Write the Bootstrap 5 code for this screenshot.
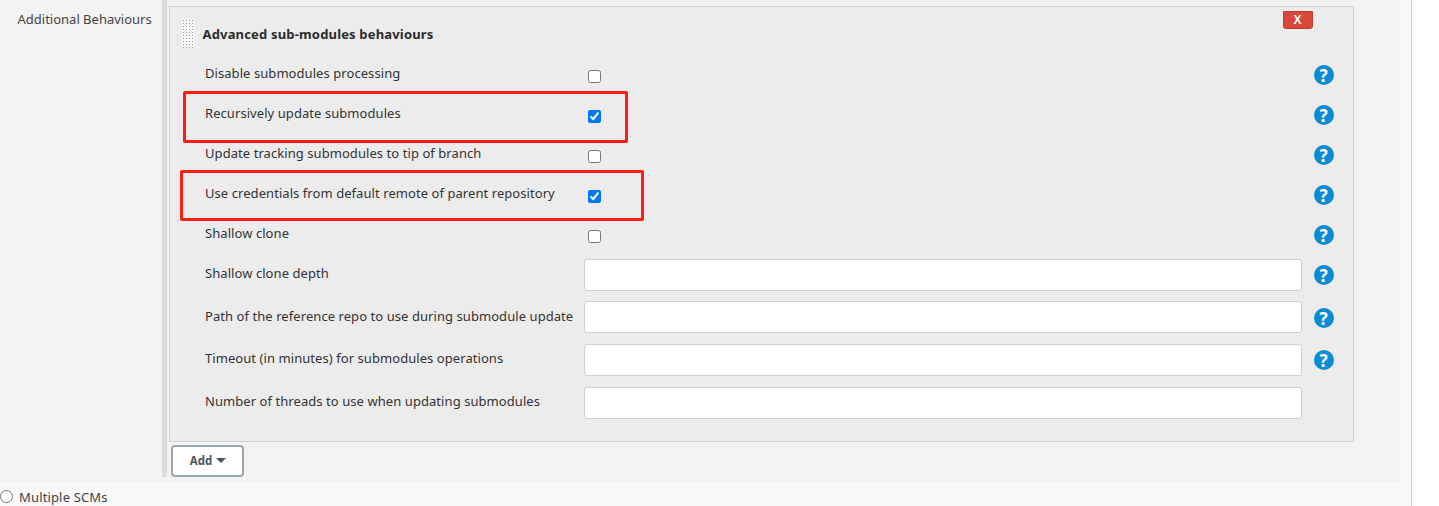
<!DOCTYPE html>
<html lang="en">
<head>
<meta charset="utf-8">
<title>Advanced sub-modules behaviours</title>
<link href="https://cdn.jsdelivr.net/npm/bootstrap@5.3.0/dist/css/bootstrap.min.css" rel="stylesheet">
<style>
html,body{height:506px;overflow:hidden}
body{background:#fff;font-family:"Noto Sans","Open Sans",sans-serif;font-size:13px;color:#333;line-height:18px}
.jk-page{width:1412px;height:506px;background:#f9f9f9;border-right:1px solid #c8c8c8}
.jk-sect{width:1400px;height:482px;background:#f3f3f3}
.jk-side{width:162px;padding:10px 0 0 18px;color:#444;flex:none;margin-left:-.5px}
.jk-main{width:1238px;height:477px;border-left:5px solid #dcdcdc;padding:6px 0 0 2px;flex:none}
.jk-panel{position:relative;width:1185px;height:436px;background:#ececec;border:1px solid #d2d2d2}
.jk-head{height:49px;padding-left:12px}
.jk-grip{width:13px;height:29px;margin-top:12px;flex:none;background-color:#f7f7f7;background-image:radial-gradient(#9c9c9c .8px,transparent .9px);background-size:3px 3px}
.jk-title{margin:18px 0 0 8px;font-weight:700;color:#2b2b2b;letter-spacing:.17px}
.jk-close{width:30px;height:18px;margin:4px 40px 0 0;background:#d9483b;color:#fff;border:1px solid #c43c30;border-radius:0 0 3px 3px;font-family:"Liberation Sans",sans-serif;font-size:12px;font-weight:700;line-height:15px;padding:0}
.jk-row{padding-left:35px}
.jk-chk{height:40px}
.jk-lab{width:414px;padding-left:35.5px;flex:none;margin-left:-35px;letter-spacing:.065px}
.jk-chk .jk-lab{margin-top:-7px}
.jk-inp .jk-lab{margin-top:-4px}
.jk-inp .jk-lab.jk-lift{margin-top:-2px}
.jk-field{width:718px;flex:none}
.jk-inp{height:32px;margin-bottom:10px}
.jk-inp.jk-first{margin-top:3px}
.jk-inp.jk-wide{margin-bottom:11px}
.jk-text{width:718px;height:32px;background:#fff;border:1px solid #cfcfcf;border-radius:3px;padding:0 8px;display:block}
.jk-box{width:13px;height:13px;margin:0 0 0 4px;display:block}
.jk-help{width:20px;height:20px;margin-left:12px;background:#0b8ad6;color:#fff;font-weight:700;font-size:17px;line-height:1;flex:none}
.jk-chk .jk-help{margin-top:-2px}
.jk-inp .jk-help.jk-low{margin-top:2px}
.jk-mark{position:absolute;border:3px solid #fb1c12;border-radius:2px;pointer-events:none}
.jk-mark-a{left:13px;top:84px;width:445px;height:52px}
.jk-mark-b{left:10px;top:163px;width:464px;height:51px}
.jk-add{width:73px;height:32px;margin:3px 0 0 2px;padding:0 0 0 2px;background:#fff;border:2px solid #9aa6b2;border-radius:4px;color:#4d545d;font-size:11.5px;font-weight:700;line-height:1}
.jk-add.dropdown-toggle::after{border-top-width:5px;border-left-width:5px;border-right-width:5px;margin-left:4px;vertical-align:2px}
.jk-radio{height:24px;padding-top:5px;color:#444;letter-spacing:.15px}
.jk-radio input{margin:0 6px 0 0;width:13px;height:13px;flex:none}
</style>
</head>
<body>
<div class="jk-page">
  <div class="jk-sect d-flex">
    <div class="jk-side">Additional Behaviours</div>
    <div class="jk-main">
      <div class="jk-panel">
        <div class="jk-head d-flex align-items-start">
          <div class="jk-grip"></div>
          <div class="jk-title flex-grow-1">Advanced sub-modules behaviours</div>
          <button type="button" class="jk-close">X</button>
        </div>
        <div class="jk-row jk-chk d-flex align-items-center">
          <div class="jk-lab">Disable submodules processing</div>
          <div class="jk-field"><input class="jk-box" type="checkbox"></div>
          <div class="jk-help rounded-circle d-flex align-items-center justify-content-center">?</div>
        </div>
        <div class="jk-row jk-chk d-flex align-items-center">
          <div class="jk-lab">Recursively update submodules</div>
          <div class="jk-field"><input class="jk-box" type="checkbox" checked></div>
          <div class="jk-help rounded-circle d-flex align-items-center justify-content-center">?</div>
        </div>
        <div class="jk-row jk-chk d-flex align-items-center">
          <div class="jk-lab">Update tracking submodules to tip of branch</div>
          <div class="jk-field"><input class="jk-box" type="checkbox"></div>
          <div class="jk-help rounded-circle d-flex align-items-center justify-content-center">?</div>
        </div>
        <div class="jk-row jk-chk d-flex align-items-center">
          <div class="jk-lab">Use credentials from default remote of parent repository</div>
          <div class="jk-field"><input class="jk-box" type="checkbox" checked></div>
          <div class="jk-help rounded-circle d-flex align-items-center justify-content-center">?</div>
        </div>
        <div class="jk-row jk-chk d-flex align-items-center">
          <div class="jk-lab">Shallow clone</div>
          <div class="jk-field"><input class="jk-box" type="checkbox"></div>
          <div class="jk-help rounded-circle d-flex align-items-center justify-content-center">?</div>
        </div>
        <div class="jk-row jk-inp jk-first d-flex align-items-center">
          <div class="jk-lab">Shallow clone depth</div>
          <div class="jk-field"><input class="jk-text" type="text"></div>
          <div class="jk-help rounded-circle d-flex align-items-center justify-content-center">?</div>
        </div>
        <div class="jk-row jk-inp jk-wide d-flex align-items-center">
          <div class="jk-lab jk-lift">Path of the reference repo to use during submodule update</div>
          <div class="jk-field"><input class="jk-text" type="text"></div>
          <div class="jk-help jk-low rounded-circle d-flex align-items-center justify-content-center">?</div>
        </div>
        <div class="jk-row jk-inp jk-wide d-flex align-items-center">
          <div class="jk-lab">Timeout (in minutes) for submodules operations</div>
          <div class="jk-field"><input class="jk-text" type="text"></div>
          <div class="jk-help rounded-circle d-flex align-items-center justify-content-center">?</div>
        </div>
        <div class="jk-row jk-inp d-flex align-items-center">
          <div class="jk-lab">Number of threads to use when updating submodules</div>
          <div class="jk-field"><input class="jk-text" type="text"></div>
        </div>
        <div class="jk-mark jk-mark-a"></div>
        <div class="jk-mark jk-mark-b"></div>
      </div>
      <button type="button" class="jk-add dropdown-toggle">Add</button>
    </div>
  </div>
  <div class="jk-radio d-flex align-items-center"><input type="radio" name="scm"><span>Multiple SCMs</span></div>
</div>
<script src="https://cdn.jsdelivr.net/npm/bootstrap@5.3.0/dist/js/bootstrap.bundle.min.js"></script>
</body>
</html>
